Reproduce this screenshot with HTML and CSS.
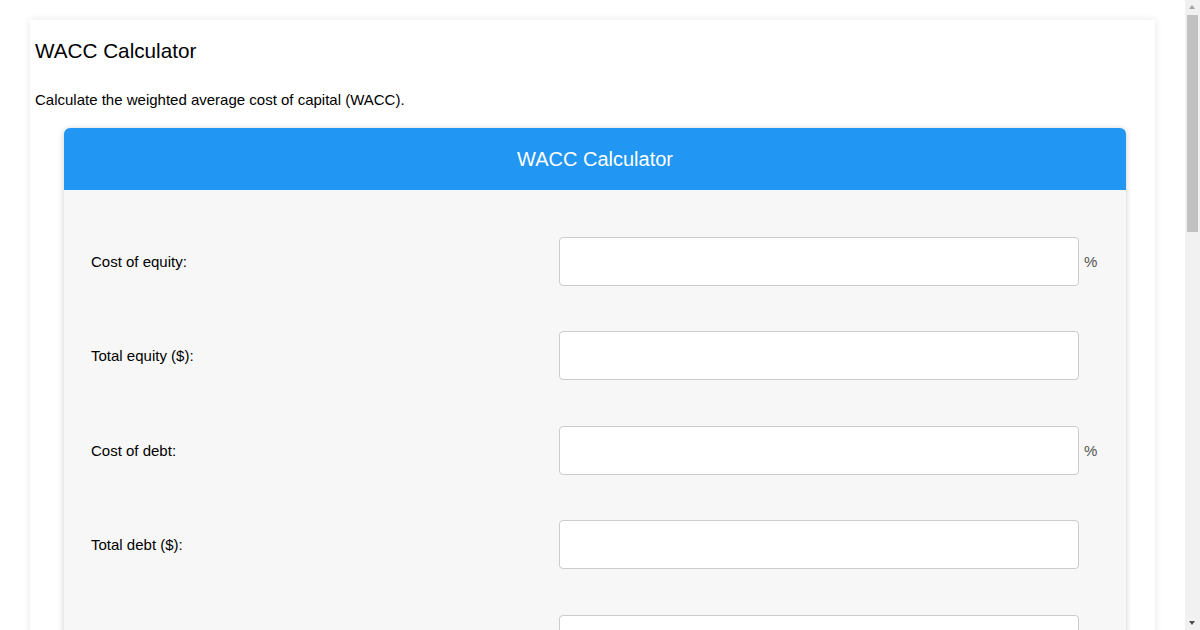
FILE: index.html
```html
<!DOCTYPE html>
<html lang="en">
<head>
    <meta charset="UTF-8">
    <meta name="viewport" content="width=device-width, initial-scale=1.0">
    <title>WACC Calculator</title>
    <link rel="stylesheet" href="styles.css">
</head>
<body>
    <div class="page">
        <h1>WACC Calculator</h1>
        <p class="intro">Calculate the weighted average cost of capital (WACC).</p>

        <div class="calculator">
            <div class="calc-header">WACC Calculator</div>
            <div class="calc-body">
                <div class="row">
                    <label for="cost-equity">Cost of equity:</label>
                    <input type="text" id="cost-equity">
                    <span class="unit">%</span>
                </div>
                <div class="row">
                    <label for="total-equity">Total equity ($):</label>
                    <input type="text" id="total-equity">
                    <span class="unit"></span>
                </div>
                <div class="row">
                    <label for="cost-debt">Cost of debt:</label>
                    <input type="text" id="cost-debt">
                    <span class="unit">%</span>
                </div>
                <div class="row">
                    <label for="total-debt">Total debt ($):</label>
                    <input type="text" id="total-debt">
                    <span class="unit"></span>
                </div>
                <div class="row">
                    <label for="tax-rate">Corporate tax rate:</label>
                    <input type="text" id="tax-rate">
                    <span class="unit">%</span>
                </div>
                <div class="actions">
                    <button class="button">Calculate</button>
                    <button class="button secondary">Reset</button>
                </div>
                <div class="row">
                    <label for="wacc">WACC:</label>
                    <input type="text" id="wacc" readonly>
                    <span class="unit">%</span>
                </div>
            </div>
        </div>

        <h2>WACC formula</h2>
        <p>WACC = E / (E + D) &times; Re + D / (E + D) &times; Rd &times; (1 &minus; Tc)</p>
        <ul class="terms">
            <li>E = market value of the company's equity</li>
            <li>D = market value of the company's debt</li>
            <li>Re = cost of equity</li>
            <li>Rd = cost of debt</li>
            <li>Tc = corporate tax rate</li>
        </ul>
        <p>The WACC is the average rate a company is expected to pay to finance its assets, weighted by the share of equity and debt in its capital structure.</p>
    </div>

    <!-- window scrollbar, as in the screenshot -->
    <div class="scrollbar">
        <span class="arrow up"></span>
        <span class="thumb"></span>
        <span class="arrow down"></span>
    </div>
</body>
</html>
```

FILE: styles.css
```css
body {
    font-family: 'Liberation Sans', Arial, sans-serif;
    font-size: 15px;
    background-color: white;
    color: #000;
    margin: 0;
}
.page {
    margin: 20px 45px 20px 30px;
    padding: 5px 5px 40px;
    background-color: white;
    box-shadow: 0 0 8px rgba(0, 0, 0, 0.1);
}
h1 {
    font-size: 20.7px;
    font-weight: normal;
    margin: 14px 0 0;
}
.intro {
    margin: 28px 0 20px;
    line-height: normal;
}
.calculator {
    margin-left: 29px;
    width: 1062px;
    border-radius: 6px;
    overflow: hidden;
    box-shadow: 0 1px 6px rgba(0, 0, 0, 0.2);
}
.calc-header {
    height: 62px;
    background-color: #2196f3;
    color: white;
    font-size: 20px;
    display: flex;
    align-items: center;
    justify-content: center;
}
.calc-body {
    background-color: #f7f7f7;
    padding: 24px 0 30px 27px;
}
.row {
    display: flex;
    align-items: center;
    height: 94.5px;
}
.row label {
    width: 468px;
}
.row input {
    width: 520px;
    height: 49px;
    box-sizing: border-box;
    border: 1px solid #ccc;
    border-radius: 4px;
    background-color: white;
    padding: 0 10px;
    font-family: inherit;
    font-size: 15px;
}
.unit {
    margin-left: 5px;
    color: #555;
}
.actions {
    display: flex;
    gap: 12px;
    padding: 23px 0 23px 468px;
}
.button {
    background-color: #2196f3;
    color: white;
    border: none;
    border-radius: 4px;
    padding: 12px 28px;
    font-family: inherit;
    font-size: 15px;
    cursor: pointer;
}
.button.secondary {
    background-color: #9e9e9e;
}
h2 {
    font-size: 19px;
    font-weight: normal;
    margin: 40px 0 20px;
}
p {
    margin: 0 0 18px;
    line-height: 1.5;
}
.terms li {
    margin-bottom: 8px;
}
.scrollbar {
    position: fixed;
    top: 0;
    right: 0;
    width: 15px;
    height: 100vh;
    background-color: #f1f1f1;
}
.thumb {
    position: absolute;
    top: 15px;
    left: 2px;
    width: 11px;
    height: 217px;
    background-color: #c1c1c1;
}
.arrow {
    position: absolute;
    left: 4px;
    width: 0;
    height: 0;
    border-left: 3.5px solid transparent;
    border-right: 3.5px solid transparent;
}
.arrow.up {
    top: 5px;
    border-bottom: 4px solid #a3a3a3;
}
.arrow.down {
    bottom: 5px;
    border-top: 4px solid #505050;
}
```
